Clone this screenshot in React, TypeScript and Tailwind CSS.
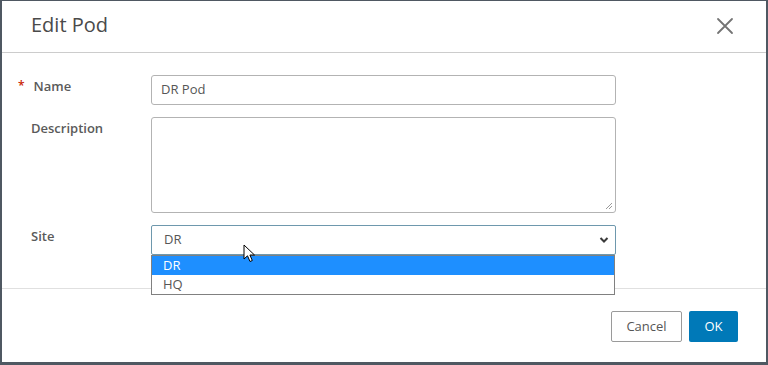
import React from "react";

export default function App() {
  const font = { fontFamily: '"Open Sans", "Noto Sans", sans-serif' };
  return (
    <div
      className="w-[768px] h-[365px] bg-[#4f5862] pl-[2px] pt-[1px] pr-[2px] pb-[3px] overflow-hidden"
      style={font}
    >
      <div className="w-[764px] h-[361px] bg-white flex flex-col">
        {/* Header */}
        <div className="h-[52px] border-b border-[#cccccc] flex items-center justify-between pl-[29px] pr-[32px] shrink-0">
          <h1 className="text-[20px] font-normal text-[#4a4a4a] leading-none pb-[3px]">Edit Pod</h1>
          <svg width="18" height="18" viewBox="0 0 18 18" className="mb-[2px]">
            <path d="M2 2 L16 16 M16 2 L2 16" stroke="#747474" strokeWidth="1.8" strokeLinecap="round" />
          </svg>
        </div>

        {/* Body */}
        <div className="relative h-[236px] border-b border-[#e0e0e0] pt-[22px] pl-[29px] shrink-0">
          <div className="flex flex-col gap-[12px]">
            <div className="flex">
              <div className="w-[120px] pt-[2px] text-[13px] font-semibold text-[#5a5a5a] leading-[18px] flex">
                <span className="text-[#c92100] -ml-[13px] mr-[9px] text-[12px]">*</span>
                <span>Name</span>
              </div>
              <div className="w-[465px] h-[30px] border border-[#b3b3b3] rounded-[3px] flex items-center pl-[9px] text-[13px] text-[#565656]">
                DR Pod
              </div>
            </div>
            <div className="flex">
              <div className="w-[120px] pt-[2px] text-[13px] font-semibold text-[#5a5a5a] leading-[18px]">
                Description
              </div>
              <div className="relative w-[465px] h-[96px] border border-[#b3b3b3] rounded-[3px]">
                <svg width="8" height="8" viewBox="0 0 8 8" className="absolute right-[2px] bottom-[2px]">
                  <path d="M7 1 L1 7 M7 4 L4 7" stroke="#9a9a9a" strokeWidth="1" />
                </svg>
              </div>
            </div>
            <div className="flex">
              <div className="w-[120px] pt-[2px] text-[13px] font-semibold text-[#5a5a5a] leading-[18px]">
                Site
              </div>
              <div className="w-[465px] h-[30px] border border-[#6e98ad] rounded-[2px] flex items-center justify-between pl-[12px] pr-[6px] text-[13px] text-[#565656]">
                <span>DR</span>
                <svg width="10" height="8" viewBox="0 0 10 8">
                  <path d="M1.5 2 L5 5.5 L8.5 2" stroke="#3a3a3a" strokeWidth="2" fill="none" />
                </svg>
              </div>
            </div>
          </div>

          {/* Dropdown list (overlay) */}
          <div className="absolute left-[149px] top-[202px] w-[464px] border border-[#808080] bg-white text-[13px] z-10">
            <div className="h-[19px] bg-[#1e8fff] text-white pl-[11px] leading-[19px]">DR</div>
            <div className="h-[19px] text-[#565656] pl-[11px] leading-[19px]">HQ</div>
          </div>

          {/* Mouse cursor */}
          <svg
            width="13"
            height="20"
            viewBox="0 0 13 20"
            className="absolute left-[241px] top-[191px] z-20"
          >
            <path
              d="M1 1 L1 15 L4.5 11.8 L7 17.5 L9.3 16.5 L6.9 11 L11.5 11 Z"
              fill="#ffffff"
              stroke="#000000"
              strokeWidth="1"
              strokeLinejoin="round"
            />
          </svg>
        </div>

        {/* Footer */}
        <div className="flex-1 flex justify-end items-start pt-[22px] pr-[28px] gap-[7px]">
          <button className="h-[31px] w-[71px] border border-[#9a9a9a] rounded-[2px] bg-white text-[13px] text-[#565656]">
            Cancel
          </button>
          <button className="h-[31px] w-[49px] rounded-[2px] bg-[#0079b8] text-[13px] text-white">
            OK
          </button>
        </div>
      </div>
    </div>
  );
}
